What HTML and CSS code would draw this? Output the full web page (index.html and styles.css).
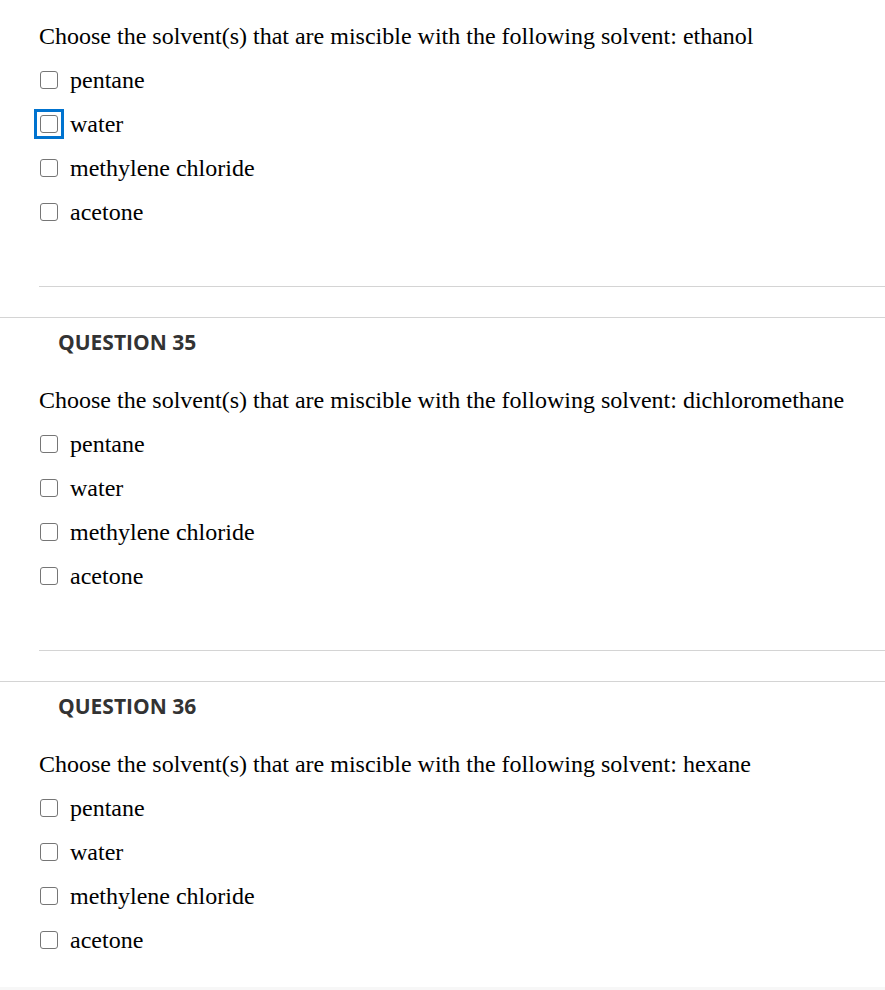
FILE: index.html
```html
<!DOCTYPE html>
<html lang="en">
<head>
<meta charset="utf-8">
<title>Questions</title>
<link rel="stylesheet" href="styles.css">
</head>
<body>
<div class="page">
  <div class="question">
    <p class="stem">Choose the solvent(s) that are miscible with the following solvent: ethanol</p>
    <ul class="options">
      <li class="option"><input type="checkbox" class="box" id="q34a"><label for="q34a">pentane</label></li>
      <li class="option"><span class="focus-ring"><input type="checkbox" class="box" id="q34b"></span><label for="q34b">water</label></li>
      <li class="option"><input type="checkbox" class="box" id="q34c"><label for="q34c">methylene chloride</label></li>
      <li class="option"><input type="checkbox" class="box" id="q34d"><label for="q34d">acetone</label></li>
    </ul>
    <hr class="sep">
  </div>

  <section class="block">
    <h3 class="title">QUESTION 35</h3>
    <div class="question">
      <p class="stem">Choose the solvent(s) that are miscible with the following solvent: dichloromethane</p>
      <ul class="options">
        <li class="option"><input type="checkbox" class="box" id="q35a"><label for="q35a">pentane</label></li>
        <li class="option"><input type="checkbox" class="box" id="q35b"><label for="q35b">water</label></li>
        <li class="option"><input type="checkbox" class="box" id="q35c"><label for="q35c">methylene chloride</label></li>
        <li class="option"><input type="checkbox" class="box" id="q35d"><label for="q35d">acetone</label></li>
      </ul>
      <hr class="sep">
    </div>
  </section>

  <section class="block">
    <h3 class="title">QUESTION 36</h3>
    <div class="question">
      <p class="stem">Choose the solvent(s) that are miscible with the following solvent: hexane</p>
      <ul class="options">
        <li class="option"><input type="checkbox" class="box" id="q36a"><label for="q36a">pentane</label></li>
        <li class="option"><input type="checkbox" class="box" id="q36b"><label for="q36b">water</label></li>
        <li class="option"><input type="checkbox" class="box" id="q36c"><label for="q36c">methylene chloride</label></li>
        <li class="option"><input type="checkbox" class="box" id="q36d"><label for="q36d">acetone</label></li>
      </ul>
    </div>
  </section>
  <div class="footer-strip"></div>
</div>
</body>
</html>
```

FILE: styles.css
```css
html, body {
  margin: 0;
  padding: 0;
  background: #ffffff;
}

.page {
  font-family: "Liberation Serif", "Times New Roman", serif;
  color: #000000;
  min-height: 990px;
  display: flex;
  flex-direction: column;
}

.question {
  padding: 14px 0 0 39px;
}

.block {
  border-top: 1px solid #d4d4d4;
}

.block .question {
  padding-top: 22px;
}

.title {
  margin: 0;
  padding: 10px 0 0 58px;
  font-family: "Open Sans", "Liberation Sans", sans-serif;
  font-weight: 700;
  font-size: 21px;
  line-height: 28px;
  color: #333333;
}

.stem {
  margin: 0;
  font-size: 24px;
  line-height: 44px;
}

.options {
  list-style: none;
  margin: 0;
  padding: 0;
}

.option {
  height: 44px;
  display: flex;
  align-items: center;
  font-size: 24px;
}

.box {
  appearance: none;
  -webkit-appearance: none;
  width: 18px;
  height: 18px;
  margin: 0 12px 0 1px;
  border: 1px solid #767676;
  border-radius: 3px;
  background: #ffffff;
  box-sizing: border-box;
  flex: none;
}

.focus-ring {
  display: inline-flex;
  flex: none;
  padding: 3px;
  margin: 0 6px 0 -5px;
  border: 3px solid #0073cf;
}

.focus-ring .box {
  margin: 0;
}

.sep {
  margin: 52px 0 30px 0;
  border: 0;
  border-top: 1px solid #d4d4d4;
  height: 0;
}

.footer-strip {
  margin-top: auto;
  height: 3px;
  background: #f7f7f7;
}
```
